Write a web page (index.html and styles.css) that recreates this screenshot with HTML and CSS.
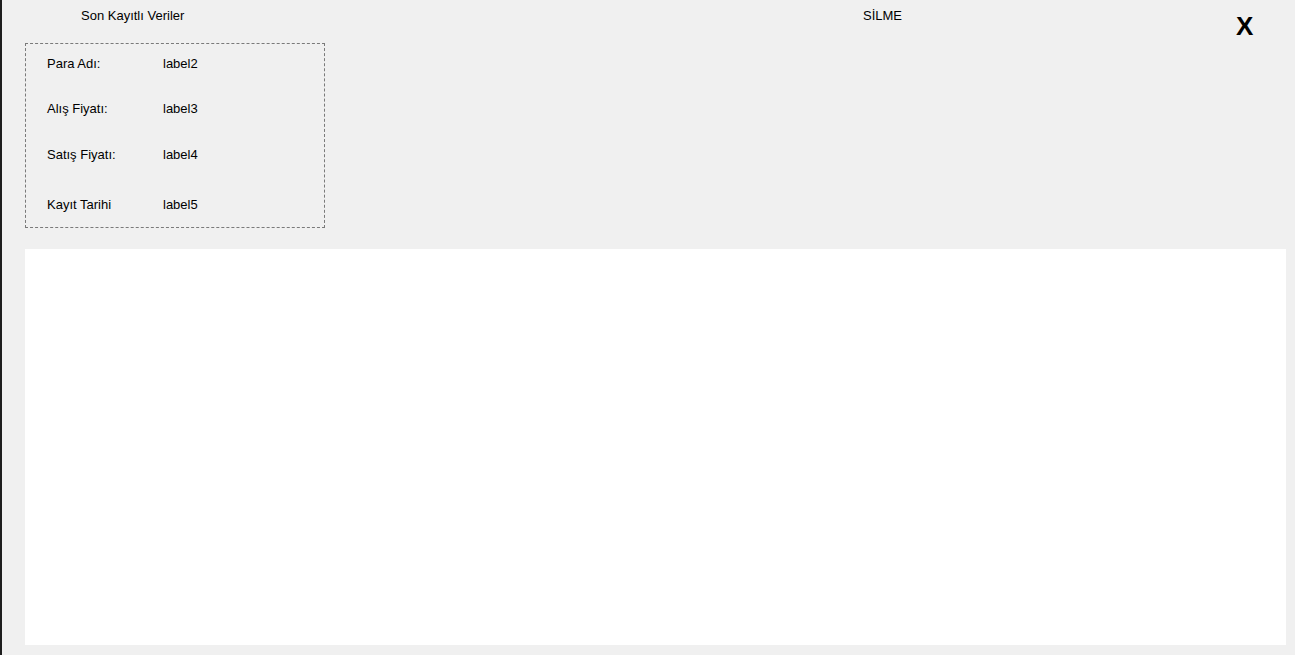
FILE: index.html
```html
<!DOCTYPE html>
<html lang="tr">
<head>
<meta charset="utf-8">
<title>Son Kayıtlı Veriler</title>
<link rel="stylesheet" href="styles.css">
</head>
<body>
<div class="app">
  <header class="top">
    <div class="title">Son Kayıtlı Veriler</div>
    <div class="delete">SİLME</div>
    <div class="close">X</div>
  </header>
  <section class="record">
    <div class="label">Para Adı:</div><div class="value">label2</div>
    <div class="label">Alış Fiyatı:</div><div class="value">label3</div>
    <div class="label">Satış Fiyatı:</div><div class="value">label4</div>
    <div class="label">Kayıt Tarihi</div><div class="value">label5</div>
  </section>
  <section class="grid-panel"></section>
</div>
</body>
</html>
```
FILE: styles.css
```css
html, body {
  margin: 0;
  padding: 0;
  background: #f0f0f0;
}
body {
  font-family: "Liberation Sans", Arial, sans-serif;
  font-size: 13px;
  line-height: 15px;
  color: #000;
}
.app {
  box-sizing: border-box;
  width: 1295px;
  height: 655px;
  border-left: 2px solid #1e1e1e;
  padding: 0 9px 10px 23px;
  display: flex;
  flex-direction: column;
  overflow: hidden;
}
.top {
  box-sizing: border-box;
  height: 43px;
  display: grid;
  grid-template-columns: 838px 373px auto;
  align-items: start;
  padding-top: 8px;
}
.title {
  padding-left: 56px;
}
.close {
  font-size: 26px;
  line-height: 30px;
  font-weight: bold;
  margin-top: 3px;
}
.record {
  box-sizing: border-box;
  width: 300px;
  height: 185px;
  border: 1px dashed #7a7a7a;
  padding: 12px 0 0 21px;
  display: grid;
  grid-template-columns: 116px auto;
  grid-template-rows: 45px 46px 50px 15px;
  align-items: start;
}
.grid-panel {
  margin-top: 21px;
  height: 396px;
  background: #fff;
}
```
